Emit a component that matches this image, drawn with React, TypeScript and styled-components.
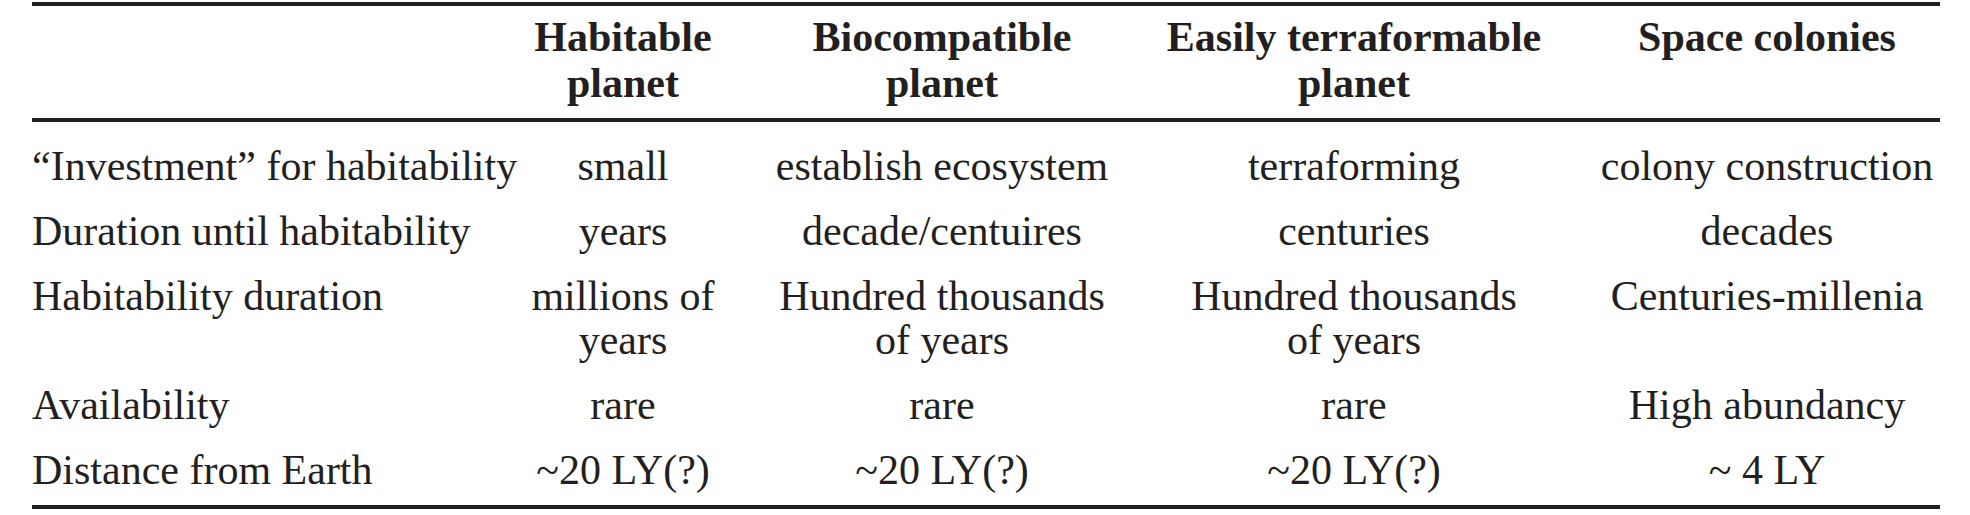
import styled, { createGlobalStyle } from "styled-components";

const INK = "#231f20";
const COLUMNS = "488px 206px 432px 392px 390px";

const GlobalStyle = createGlobalStyle`
  html, body {
    margin: 0;
    padding: 0;
    background: #ffffff;
  }
  body {
    font-family: "Liberation Serif", "Times New Roman", serif;
    color: ${INK};
  }
`;

type Row = {
  label: string;
  values: string[][]; // each value may hold several lines
};

const headers: string[][] = [
  ["Habitable", "planet"],
  ["Biocompatible", "planet"],
  ["Easily terraformable", "planet"],
  ["Space colonies"],
];

const rows: Row[] = [
  {
    label: "\u201CInvestment\u201D for habitability",
    values: [
      ["small"],
      ["establish ecosystem"],
      ["terraforming"],
      ["colony construction"],
    ],
  },
  {
    label: "Duration until habitability",
    values: [["years"], ["decade/centuires"], ["centuries"], ["decades"]],
  },
  {
    label: "Habitability duration",
    values: [
      ["millions of", "years"],
      ["Hundred thousands", "of years"],
      ["Hundred thousands", "of years"],
      ["Centuries-millenia"],
    ],
  },
  {
    label: "Availability",
    values: [["rare"], ["rare"], ["rare"], ["High abundancy"]],
  },
  {
    label: "Distance from Earth",
    values: [["~20 LY(?)"], ["~20 LY(?)"], ["~20 LY(?)"], ["~ 4 LY"]],
  },
];

const renderLines = (lines: string[]) =>
  lines.map((line, i) => (
    <span key={i}>
      {line}
      {i < lines.length - 1 && <br />}
    </span>
  ));

const App = () => {
  return (
    <>
      <GlobalStyle />
      <Page>
        <Table>
          <HeaderRow>
            <HeadCell />
            {headers.map((h, i) => (
              <HeadCell key={i}>{renderLines(h)}</HeadCell>
            ))}
          </HeaderRow>
          <Body>
            {rows.map((row) => (
              <BodyRow key={row.label}>
                <LabelCell>{row.label}</LabelCell>
                {row.values.map((v, i) => (
                  <Cell key={i}>{renderLines(v)}</Cell>
                ))}
              </BodyRow>
            ))}
          </Body>
        </Table>
      </Page>
    </>
  );
};

export default App;

const Page = styled.div`
  padding: 2px 30px 0 32px;
`;

const Table = styled.div`
  width: 1908px;
  border-top: 4px solid ${INK};
  border-bottom: 4px solid ${INK};
  font-size: 42px;
`;

const HeaderRow = styled.div`
  display: grid;
  grid-template-columns: ${COLUMNS};
  align-items: start;
  padding: 8px 0 12px;
  border-bottom: 4px solid ${INK};
`;

const HeadCell = styled.div`
  font-weight: bold;
  line-height: 46px;
  text-align: center;
  white-space: nowrap;

  &:last-child {
    padding-left: 44px;
  }
`;

const Body = styled.div`
  padding: 12px 0 2px;
`;

const BodyRow = styled.div`
  display: grid;
  grid-template-columns: ${COLUMNS};
  align-items: start;
  padding: 10px 0 11px;
`;

const LabelCell = styled.div`
  line-height: 44px;
  white-space: nowrap;
`;

const Cell = styled.div`
  line-height: 44px;
  text-align: center;
  white-space: nowrap;

  &:last-child {
    padding-left: 44px;
  }
`;
